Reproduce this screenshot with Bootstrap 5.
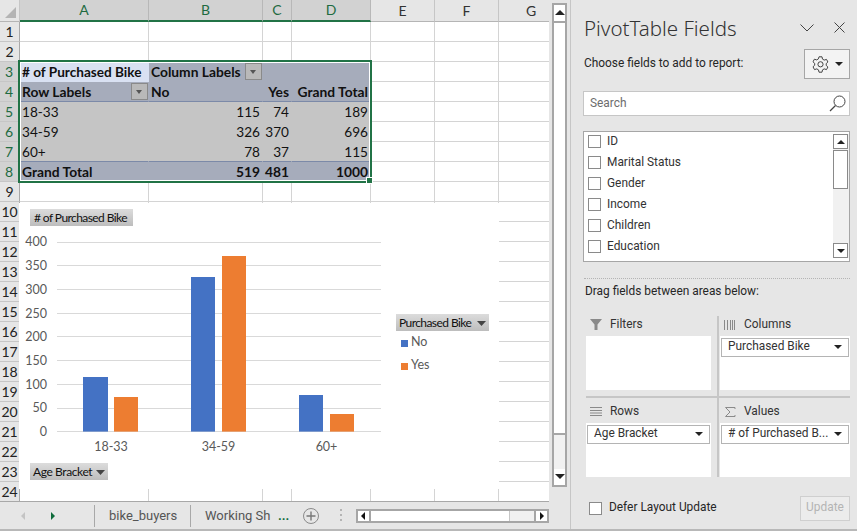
<!doctype html>
<html lang="en"><head><meta charset="utf-8"><title>PivotTable</title>
<link href="https://cdn.jsdelivr.net/npm/bootstrap@5.3.0/dist/css/bootstrap.min.css" rel="stylesheet">
<script src="https://cdn.jsdelivr.net/npm/bootstrap@5.3.0/dist/js/bootstrap.bundle.min.js"></script>
<style>
html,body{height:531px;overflow:hidden}
body{background:#e6e6e6;width:857px;font-family:Roboto,"Noto Sans",sans-serif;font-size:11.9px;color:#262626}
.xl-app{height:529px}
.xl-foot{height:2px;background:#b8b8b8}
.xl-left{width:570px;flex:none}
.xl-main{height:502px}
.xl-sheet{width:549px;height:502px;position:relative;overflow:hidden;background:#fff;border-bottom:1px solid #a8a8a8}
.xl-grid{table-layout:fixed;border-collapse:separate;border-spacing:0;width:564px;font-family:Lato,"Liberation Sans",sans-serif;font-size:13.6px;color:#111}
.xl-grid th,.xl-grid td{height:20px;padding:0 2px;border-right:1px solid #d4d4d4;border-bottom:1px solid #d4d4d4;white-space:nowrap;overflow:hidden;line-height:18px}
.xl-grid thead th{height:22px;background:#e6e6e6;color:#333;text-align:center;font-weight:400;font-size:14px;border-right:1px solid #c6c6c6;border-bottom:1px solid #b5b5b5}
.xl-grid thead th.xl-on{background:#d2d2d2;color:#1e6b41;border-bottom:2px solid #217346;border-right-color:#b8b8b8}
.xl-grid tbody th{background:#e6e6e6;font-weight:400;text-align:center;padding:0;color:#222;font-size:14px;border-right:1px solid #a8a8a8;border-bottom:1px solid #c6c6c6}
.xl-grid tbody th.xl-on{background:#d2d2d2;color:#1e6b41;border-right:2px solid #217346}
.xl-corner{position:relative}
.xl-corner::after{content:"";position:absolute;right:3px;bottom:3px;border-style:solid;border-width:0 0 11px 11px;border-color:transparent transparent #b4b4b4 transparent}
td.xl-hd{background:#a6acbb;font-weight:700;font-size:13.8px;border-color:#a6acbb}
td.xl-bd{background:#c5c5c5;border-color:#c5c5c5}
td.xl-act{background:#d9e1f2;font-weight:700;border-color:#d9e1f2}
td.xl-ln{border-bottom-color:#7c8aa8}
td.xl-end{text-align:right}
.xl-fltr{width:17px;height:17px;flex:none;margin-right:-2px;background:#b9b9b9;border:1px solid #8a8a8a;position:relative}
.xl-fltr::after{content:"";position:absolute;left:4px;top:6px;border-style:solid;border-width:4px 3.5px 0;border-color:#555 transparent transparent}
.xl-sel{position:absolute;left:18px;top:60px;width:354px;height:123px;border:2px solid #217346;outline:1px solid #fff;outline-offset:-3px;pointer-events:none}
.xl-grip{position:absolute;right:-3px;bottom:-3px;width:7px;height:7px;background:#217346;border:1px solid #fff}
.xl-chart{position:absolute;left:19px;top:203px;width:480px;height:286px;background:#fff;font-family:Lato,"Liberation Sans",sans-serif}
.xl-chart svg{display:block}
.xl-ax{font-size:12.5px;fill:#595959}
.xl-pl{font-size:12px;fill:#111;letter-spacing:-.4px}
.xl-tight{letter-spacing:-.58px}
.xl-vbar{width:15px;margin-left:3px;height:484px;margin-top:3px;border:2px solid #a6a6a6;background:#f1f1f1}
.xl-vbtn{height:16px;background:#fff;flex:none;position:relative}
.xl-thumb{background:#fff;border-top:2px solid #a6a6a6;border-bottom:2px solid #a6a6a6;height:414px;flex:none}
.xl-up::after,.xl-dn::after{content:"";position:absolute;left:50%;top:50%;margin:-3px 0 0 -5px;border-style:solid;border-color:#222 transparent}
.xl-up::after{border-width:0 5px 5px}
.xl-dn::after{border-width:5px 5px 0}
.xl-tabs{height:27px;font-size:13px;color:#555}
.xl-arr{width:0;height:0;flex:none;border-style:solid;border-width:4px 0 4px 4px;border-color:transparent transparent transparent #0e6b3b}
.xl-arr-l{border-width:4px 4px 4px 0;border-color:transparent #c4c4c4 transparent transparent;margin-left:21px}
.xl-arr-r{margin-left:26px}
.xl-sep{width:1px;height:22px;background:#a8a8a8;flex:none}
.xl-sep-a{margin-left:39px}
.xl-sep-b{margin-left:13px}
.xl-tabname{white-space:nowrap;flex:none;margin-left:14px}
.xl-t1{width:68px}
.xl-t2{width:65px}
.xl-more{color:#0e6b3b;margin-left:8px;width:12px;flex:none;line-height:1;font-weight:700}
.xl-plus{width:16px;height:16px;flex:none;margin-left:13px}
.xl-vdots{flex:none;margin-left:21px}
.xl-hs{width:193px;height:14px;margin-left:13px;border:2px solid #a6a6a6;background:#f1f1f1;flex:none}
.xl-hb{width:13px;background:#fff;position:relative;flex:none}
.xl-hb.xl-l{border-right:2px solid #a6a6a6}
.xl-hb.xl-r{border-left:2px solid #a6a6a6;margin-left:auto}
.xl-hb::after{content:"";position:absolute;top:1px;left:3px;border-style:solid;border-color:transparent #111}
.xl-hb.xl-l::after{border-width:4.5px 4.5px 4.5px 0}
.xl-hb.xl-r::after{border-width:4.5px 0 4.5px 4.5px;left:4px}
.xl-hthumb{width:139px;background:#fff;border-right:1px solid #c6c6c6;flex:none}
.pv-panel{width:287px;flex:none;height:529px;border-left:1px solid #c6c6c6;padding:0 7px 0 13px}
.pv-title{font-family:"Noto Sans",sans-serif;font-size:20.5px;font-weight:300;color:#333;height:44px;padding-top:13px;line-height:30px}
.pv-ctl{gap:20px;margin-top:9px;margin-right:5px}
.pv-hrow{height:40px}
.pv-gear{width:46px;height:30px;border:1px solid #a6a6a6;background:#f3f3f3;gap:6px}
.pv-car{border-style:solid;border-width:4px 4px 0;border-color:#222 transparent transparent;width:0;height:0;flex:none}
.pv-search{height:25px;background:#fff;border:1px solid #c6c6c6;padding:0 3px 0 6px;color:#6d6d6d;margin:7px 0 0 -1px}
.pv-list{height:131px;margin:15px 0 0 -1px;background:#fff;border:1px solid #a6a6a6;padding:0 0 0 4px;overflow:hidden;position:relative}
.pv-row{height:21px;color:#333;position:relative;top:-1px}
.pv-box{width:13px;height:13px;border:1px solid #8a8a8a;background:#fff;flex:none}
.pv-lbl{margin-left:6px}
.pv-sb{position:absolute;right:0;top:2px;width:16px;height:124px;background:#f1f1f1}
.pv-sbtn{height:15px;width:15px;border:1px solid #8a8a8a;background:#fff;position:relative;flex:none}
.pv-sbtn.xl-up::after,.pv-sbtn.xl-dn::after{border-width:0 4px 4px;margin:-2px 0 0 -4px}
.pv-sbtn.xl-dn::after{border-width:4px 4px 0}
.pv-sth{height:39px;width:15px;border:1px solid #8a8a8a;background:#fff;flex:none;margin-top:1px}
.pv-dots{border-top:1px dotted #b4b4b4;margin-top:16px;height:5px}
.pv-drag{padding-left:1px}
.pv-areas{display:grid;grid-template-columns:131px 3px 130px;grid-template-rows:82px 1px 80px;width:264px;height:163px;margin:13px 0 0 2px}
.pv-vl{grid-column:2;grid-row:1/4;background:#c6c6c6;width:2px;margin-top:2px}
.pv-hl{grid-column:1/4;grid-row:2;background:#c6c6c6;height:2px}
.pv-area{display:flex;flex-direction:column}
.pv-low{padding-top:4px}
.pv-ah{height:22px;padding:0 0 0 4px;color:#333;flex:none;gap:8px}
.pv-ai{width:12px;flex:none}
.pv-abox{background:#fff;width:125px;height:54px;padding:2px 1px}
.pv-col2 .pv-abox{width:130px}
.pv-item{height:19px;border:1px solid #b4b4b4;background:#fff;padding:0 6px;color:#333;white-space:nowrap}
.pv-upd{width:50px;height:25px;border:1px solid #cfcfcf;color:#b4b4b4;background:#ececec}
.pv-foot{margin-top:19px;height:25px;padding-left:5px}
.pv-def{margin-left:7px}
</style></head>
<body>
<div class="d-flex xl-app">
<div class="xl-left d-flex flex-column">
 <div class="d-flex xl-main">
  <div class="xl-sheet">
   <table class="xl-grid">
    <colgroup><col style="width:20px"><col style="width:129px"><col style="width:114px"><col style="width:29px"><col style="width:79px"><col style="width:64px"><col style="width:64px"><col></colgroup>
    <thead><tr><th class="xl-corner"></th><th class="xl-on">A</th><th class="xl-on">B</th><th class="xl-on">C</th><th class="xl-on">D</th><th>E</th><th>F</th><th>G</th></tr></thead>
    <tbody>
    <tr><th>1</th><td></td><td></td><td></td><td></td><td></td><td></td><td></td></tr>
    <tr><th>2</th><td></td><td></td><td></td><td></td><td></td><td></td><td></td></tr>
    <tr><th class="xl-on">3</th><td class="xl-act">#&nbsp;of Purchased Bike</td><td class="xl-hd"><div class="d-flex justify-content-between align-items-center">Column Labels<span class="xl-fltr"></span></div></td><td class="xl-hd"></td><td class="xl-hd"></td><td></td><td></td><td></td></tr>
    <tr><th class="xl-on">4</th><td class="xl-hd xl-ln"><div class="d-flex justify-content-between align-items-center">Row Labels<span class="xl-fltr"></span></div></td><td class="xl-hd xl-ln">No</td><td class="xl-hd xl-ln xl-end">Yes</td><td class="xl-hd xl-ln xl-end">Grand Total</td><td></td><td></td><td></td></tr>
    <tr><th class="xl-on">5</th><td class="xl-bd">18-33</td><td class="xl-bd xl-end">115</td><td class="xl-bd xl-end">74</td><td class="xl-bd xl-end">189</td><td></td><td></td><td></td></tr>
    <tr><th class="xl-on">6</th><td class="xl-bd">34-59</td><td class="xl-bd xl-end">326</td><td class="xl-bd xl-end">370</td><td class="xl-bd xl-end">696</td><td></td><td></td><td></td></tr>
    <tr><th class="xl-on">7</th><td class="xl-bd xl-ln">60+</td><td class="xl-bd xl-end xl-ln">78</td><td class="xl-bd xl-end xl-ln">37</td><td class="xl-bd xl-end xl-ln">115</td><td></td><td></td><td></td></tr>
    <tr><th class="xl-on">8</th><td class="xl-hd">Grand Total</td><td class="xl-hd xl-end">519</td><td class="xl-hd xl-end">481</td><td class="xl-hd xl-end">1000</td><td></td><td></td><td></td></tr>
    <tr><th>9</th><td></td><td></td><td></td><td></td><td></td><td></td><td></td></tr>
    <tr><th>10</th><td></td><td></td><td></td><td></td><td></td><td></td><td></td></tr>
    <tr><th>11</th><td></td><td></td><td></td><td></td><td></td><td></td><td></td></tr>
    <tr><th>12</th><td></td><td></td><td></td><td></td><td></td><td></td><td></td></tr>
    <tr><th>13</th><td></td><td></td><td></td><td></td><td></td><td></td><td></td></tr>
    <tr><th>14</th><td></td><td></td><td></td><td></td><td></td><td></td><td></td></tr>
    <tr><th>15</th><td></td><td></td><td></td><td></td><td></td><td></td><td></td></tr>
    <tr><th>16</th><td></td><td></td><td></td><td></td><td></td><td></td><td></td></tr>
    <tr><th>17</th><td></td><td></td><td></td><td></td><td></td><td></td><td></td></tr>
    <tr><th>18</th><td></td><td></td><td></td><td></td><td></td><td></td><td></td></tr>
    <tr><th>19</th><td></td><td></td><td></td><td></td><td></td><td></td><td></td></tr>
    <tr><th>20</th><td></td><td></td><td></td><td></td><td></td><td></td><td></td></tr>
    <tr><th>21</th><td></td><td></td><td></td><td></td><td></td><td></td><td></td></tr>
    <tr><th>22</th><td></td><td></td><td></td><td></td><td></td><td></td><td></td></tr>
    <tr><th>23</th><td></td><td></td><td></td><td></td><td></td><td></td><td></td></tr>
    <tr><th>24</th><td></td><td></td><td></td><td></td><td></td><td></td><td></td></tr>
    </tbody>
   </table>
   <div class="xl-sel"><span class="xl-grip"></span></div>
   <div class="xl-chart">
    <svg width="480" height="286" viewBox="19 203 480 286" role="img" aria-label="Chart">
     <defs><linearGradient id="pg" x1="0" y1="0" x2="0" y2="1"><stop offset="0" stop-color="#dcdcdc"/><stop offset="1" stop-color="#bdbdbd"/></linearGradient></defs>
     <rect x="30" y="209" width="103" height="17" fill="url(#pg)"/>
     <text x="34" y="222" class="xl-pl xl-tight"># of Purchased Bike</text>
     <path d="M57 242.5H381M57 265.5H381M57 289.5H381M57 313.5H381M57 336.5H381M57 360.5H381M57 384.5H381M57 408.5H381M57 431.5H381" stroke="#d9d9d9"/>
     <g class="xl-ax" text-anchor="end">
      <text x="47" y="246">400</text><text x="47" y="270">350</text><text x="47" y="294">300</text><text x="47" y="318">250</text><text x="47" y="341">200</text><text x="47" y="365">150</text><text x="47" y="389">100</text><text x="47" y="412">50</text><text x="47" y="436">0</text>
     </g>
     <g fill="#4472c4"><rect x="83" y="377" width="25" height="54.6"/><rect x="191" y="277" width="24" height="154.6"/><rect x="299" y="395" width="24" height="36.6"/></g>
     <g fill="#ed7d31"><rect x="114" y="397" width="24" height="34.6"/><rect x="222" y="256" width="24" height="175.6"/><rect x="330" y="414" width="24" height="17.6"/></g>
     <g class="xl-ax" text-anchor="middle"><text x="111" y="451">18-33</text><text x="218.500" y="451">34-59</text><text x="326.500" y="451">60+</text></g>
     <rect x="396" y="314" width="93" height="17" fill="url(#pg)"/>
     <text x="399" y="327" class="xl-pl xl-tight">Purchased Bike</text>
     <path d="M477 321h9l-4.500 5z" fill="#444"/>
     <rect x="401" y="340" width="7" height="7" fill="#4472c4"/><text x="411" y="346" class="xl-ax">No</text>
     <rect x="401" y="363" width="7" height="7" fill="#ed7d31"/><text x="411" y="369" class="xl-ax">Yes</text>
     <rect x="30" y="463" width="78" height="17" fill="url(#pg)"/>
     <text x="33" y="476" class="xl-pl">Age Bracket</text>
     <path d="M96 470h9l-4.500 5z" fill="#444"/>
    </svg>
   </div>
  </div>
  <div class="xl-vbar d-flex flex-column">
   <div class="xl-vbtn xl-up"></div><div class="xl-thumb"></div><div class="flex-grow-1"></div><div class="xl-vbtn xl-dn"></div>
  </div>
 </div>
 <div class="xl-tabs d-flex align-items-center">
  <span class="xl-arr xl-arr-l"></span><span class="xl-arr xl-arr-r"></span>
  <span class="xl-sep xl-sep-a"></span>
  <span class="xl-tabname xl-t1">bike_buyers</span>
  <span class="xl-sep xl-sep-b"></span>
  <span class="xl-tabname xl-t2">Working Sh</span>
  <span class="xl-more">...</span>
  <svg class="xl-plus" viewBox="0 0 16 16"><circle cx="8" cy="8" r="7.500" fill="none" stroke="#8a8a8a"/><path d="M8 3.500v9M3.500 8h9" stroke="#777" stroke-width="1.400"/></svg>
  <svg class="xl-vdots" width="3" height="14"><g fill="#b4b4b4"><rect y="0" width="2" height="2"/><rect y="5" width="2" height="2"/><rect y="10" width="2" height="2"/></g></svg>
  <div class="xl-hs d-flex">
   <div class="xl-hb xl-l"></div><div class="xl-hthumb"></div><div class="xl-hb xl-r"></div>
  </div>
 </div>
</div>
<aside class="pv-panel">
 <div class="pv-title d-flex justify-content-between align-items-start">
  <span>PivotTable Fields</span>
  <span class="pv-ctl d-flex align-items-center">
   <svg width="14" height="8" viewBox="0 0 14 8"><path d="M.5.500 7 7 13.500.500" fill="none" stroke="#444"/></svg>
   <svg width="11" height="11" viewBox="0 0 11 11"><path d="M.5.500l10 10M10.500.500l-10 10" fill="none" stroke="#444"/></svg>
  </span>
 </div>
 <div class="pv-hrow d-flex justify-content-between align-items-center">
  <span>Choose fields to add to report:</span>
  <button type="button" class="pv-gear d-flex align-items-center justify-content-center p-0" aria-label="Tools">
   <svg width="17" height="17" viewBox="0 0 17 17"><path d="M7 .8h3l.5 2.300 1.700 1 2.300-.7 1.400 2.600-1.700 1.600v1.800l1.700 1.600-1.400 2.600-2.300-.7-1.700 1-.5 2.300H7l-.5-2.300-1.700-1-2.300.7L1 10.800l1.700-1.600V7.400L1 5.800l1.400-2.600 2.300.7 1.700-1z" fill="none" stroke="#444"/><circle cx="8.500" cy="8.300" r="2.600" fill="none" stroke="#444"/></svg>
   <span class="pv-car"></span>
  </button>
 </div>
 <div class="pv-search d-flex justify-content-between align-items-center">
  <span>Search</span>
  <svg width="17" height="17" viewBox="0 0 17 17"><circle cx="10.500" cy="6.500" r="5.500" fill="none" stroke="#444"/><path d="M6.500 10.500 1 16" stroke="#444" stroke-width="1.300"/></svg>
 </div>
 <div class="pv-list">
  <div class="pv-row d-flex align-items-center"><span class="pv-box"></span><span class="pv-lbl">ID</span></div>
  <div class="pv-row d-flex align-items-center"><span class="pv-box"></span><span class="pv-lbl">Marital Status</span></div>
  <div class="pv-row d-flex align-items-center"><span class="pv-box"></span><span class="pv-lbl">Gender</span></div>
  <div class="pv-row d-flex align-items-center"><span class="pv-box"></span><span class="pv-lbl">Income</span></div>
  <div class="pv-row d-flex align-items-center"><span class="pv-box"></span><span class="pv-lbl">Children</span></div>
  <div class="pv-row d-flex align-items-center"><span class="pv-box"></span><span class="pv-lbl">Education</span></div>
  <div class="pv-sb d-flex flex-column"><div class="pv-sbtn xl-up"></div><div class="pv-sth"></div><div class="flex-grow-1"></div><div class="pv-sbtn xl-dn"></div></div>
 </div>
 <div class="pv-dots"></div>
 <div class="pv-drag">Drag fields between areas below:</div>
 <div class="pv-areas">
  <div class="pv-area" style="grid-column:1;grid-row:1">
   <div class="pv-ah d-flex align-items-center"><svg class="pv-ai" height="11" viewBox="0 0 12 11"><path d="M0 0h12L7.500 5.500V11h-3V5.500z" fill="#8a8a8a"/></svg>Filters</div>
   <div class="pv-abox"></div>
  </div>
  <div class="pv-vl"></div>
  <div class="pv-area pv-col2" style="grid-column:3;grid-row:1">
   <div class="pv-ah d-flex align-items-center"><svg class="pv-ai" height="10" viewBox="0 0 12 10"><path d="M.5 0v10M3.500 0v10M6.500 0v10M8.500 0v10M10.500 0v10" stroke="#8a8a8a"/></svg>Columns</div>
   <div class="pv-abox"><div class="pv-item d-flex justify-content-between align-items-center"><span>Purchased Bike</span><span class="pv-car"></span></div></div>
  </div>
  <div class="pv-hl"></div>
  <div class="pv-area pv-low" style="grid-column:1;grid-row:3">
   <div class="pv-ah d-flex align-items-center"><svg class="pv-ai" height="9" viewBox="0 0 12 9"><path d="M0 .5h12M0 3.500h12M0 6h12M0 8.500h12" stroke="#8a8a8a"/></svg>Rows</div>
   <div class="pv-abox"><div class="pv-item d-flex justify-content-between align-items-center"><span>Age Bracket</span><span class="pv-car"></span></div></div>
  </div>
  <div class="pv-area pv-col2 pv-low" style="grid-column:3;grid-row:3">
   <div class="pv-ah d-flex align-items-center"><svg class="pv-ai" height="10" viewBox="0 0 12 10"><path d="M11 2V.5H1.500L6 5 1.500 9.500H11V8" fill="none" stroke="#8a8a8a"/></svg>Values</div>
   <div class="pv-abox"><div class="pv-item d-flex justify-content-between align-items-center"><span># of Purchased B...</span><span class="pv-car"></span></div></div>
  </div>
 </div>
 <div class="pv-foot d-flex justify-content-between align-items-center">
  <span class="d-flex align-items-center"><span class="pv-box"></span><span class="pv-def">Defer Layout Update</span></span>
  <span class="pv-upd d-flex align-items-center justify-content-center">Update</span>
 </div>
</aside>
</div>
<div class="xl-foot"></div>
</body></html>
